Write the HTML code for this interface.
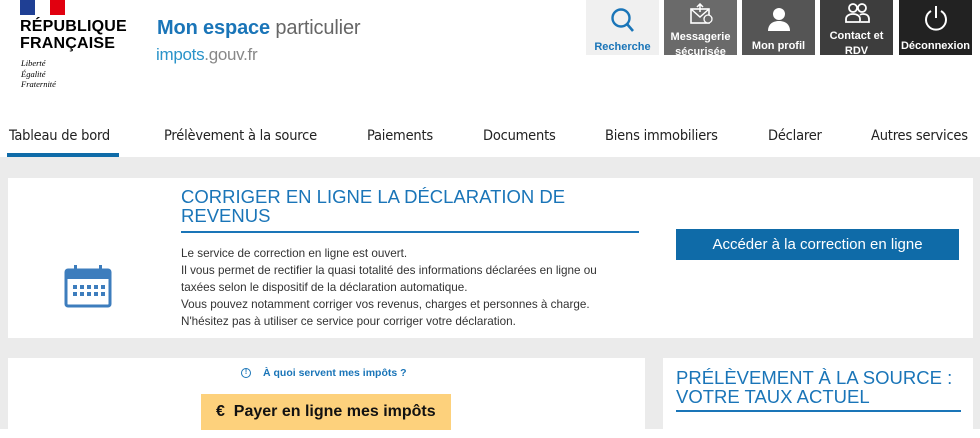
<!DOCTYPE html>
<html><head><meta charset="utf-8"><style>
*{margin:0;padding:0;box-sizing:border-box}
body{width:980px;height:429px;overflow:hidden;background:#fff;font-family:"Liberation Sans",Arial,sans-serif;position:relative}
.a{position:absolute}
.hb{position:absolute;top:0;height:55px;width:73px;color:#fff;font-weight:bold;font-size:11px;text-align:center;line-height:15px}
.nav{position:absolute;top:128px;font-size:14.5px;color:#222;font-family:"DejaVu Sans Condensed","Liberation Sans Narrow","Liberation Sans",sans-serif;letter-spacing:-0.2px}
.gray{position:absolute;left:0;top:157px;width:980px;height:272px;background:#ebebeb}
.card{position:absolute;background:#fff}
.txt{font-size:11.7px;color:#333;line-height:17px}
</style></head><body>
<div class="a" style="left:20px;top:0;width:15px;height:15px;background:#1f3f94"></div>
<div class="a" style="left:35px;top:0;width:15px;height:15px;background:#fff"></div>
<div class="a" style="left:50px;top:0;width:15px;height:15px;background:#e1000f"></div>
<div class="a" style="left:20px;top:18px;font-weight:bold;font-size:16px;line-height:17px;color:#000;letter-spacing:0.2px">RÉPUBLIQUE<br>FRANÇAISE</div>
<div class="a" style="left:21px;top:58px;font-family:'Liberation Serif',serif;font-style:italic;font-size:8.5px;line-height:10.5px;color:#000">Liberté<br>Égalité<br>Fraternité</div>
<div class="a" style="left:157px;top:17px;font-size:20px;font-weight:bold;color:#1a75b8;letter-spacing:-0.15px">Mon espace <span style="font-weight:normal;color:#666">particulier</span></div>
<div class="a" style="left:156px;top:45px;font-size:17px;color:#2a93c9;letter-spacing:-0.3px">impots<span style="color:#888">.gouv.fr</span></div>
<div class="hb" style="left:586px;background:#f0f0f0;color:#1a75b8">
<svg width="26" height="28" viewBox="0 0 26 28" style="margin-top:7px"><circle cx="11" cy="11" r="8.5" fill="none" stroke="#1a75b8" stroke-width="2.4"/><path d="M17 17l6 7" stroke="#1a75b8" stroke-width="2.6"/></svg><div>Recherche</div></div>
<div class="hb" style="left:664px;background:#6a6a6a"><svg width="26" height="22" viewBox="0 0 26 22" style="margin-top:3px"><rect x="3" y="6" width="18" height="14" fill="none" stroke="#fff" stroke-width="1.6"/><path d="M3 6l9 8 9-8M12 1v8M9 4l3-3 3 3" stroke="#fff" stroke-width="1.5" fill="none"/><circle cx="20" cy="16" r="4" fill="#6a6a6a" stroke="#fff" stroke-width="1.3"/></svg><div>Messagerie<br>sécurisée</div></div>
<div class="hb" style="left:742px;background:#555"><svg width="26" height="26" viewBox="0 0 26 26" style="margin-top:6px"><circle cx="13" cy="8" r="6" fill="#fff"/><path d="M2 25c0-7 5-10 11-10s11 3 11 10z" fill="#fff"/></svg><div style="margin-top:2px">Mon profil</div></div>
<div class="hb" style="left:820px;background:#3d3d3d"><svg width="28" height="22" viewBox="0 0 28 22" style="margin-top:2px"><circle cx="10" cy="6" r="4" fill="none" stroke="#fff" stroke-width="1.8"/><circle cx="19" cy="6" r="4" fill="none" stroke="#fff" stroke-width="1.8"/><path d="M3 20v-3c0-3 3-5 7-5s7 2 7 5v3zM17 13c1-1 2-1 3-1 4 0 6 2 6 5v3h-8" fill="none" stroke="#fff" stroke-width="1.8"/></svg><div>Contact et<br>RDV</div></div>
<div class="hb" style="left:899px;background:#222"><svg width="26" height="28" viewBox="0 0 26 28" style="margin-top:4px"><path d="M8 7a10 10 0 1 0 10 0" fill="none" stroke="#fff" stroke-width="2"/><path d="M13 2v12" stroke="#fff" stroke-width="2"/></svg><div style="margin-top:2px">Déconnexion</div></div>
<div class="nav" style="left:9px">Tableau de bord</div>
<div class="nav" style="left:164px">Prélèvement à la source</div>
<div class="nav" style="left:367px">Paiements</div>
<div class="nav" style="left:483px">Documents</div>
<div class="nav" style="left:605px">Biens immobiliers</div>
<div class="nav" style="left:768px">Déclarer</div>
<div class="nav" style="left:871px">Autres services</div>
<div class="a" style="left:7px;top:153px;width:112px;height:4px;background:#0f6ba8"></div>
<div class="gray"></div>
<div class="card" style="left:8px;top:178px;width:965px;height:160px"></div>
<svg class="a" style="left:64px;top:264px" width="49" height="44" viewBox="0 0 49 44"><rect x="2" y="6" width="44" height="36" rx="2" fill="none" stroke="#3d7dbd" stroke-width="3"/><rect x="2" y="6" width="44" height="9" fill="#3d7dbd"/><rect x="10" y="1" width="3" height="8" fill="#3d7dbd"/><rect x="35" y="1" width="3" height="8" fill="#3d7dbd"/><g fill="#3d7dbd"><rect x="9" y="21" width="4" height="4"/><rect x="16" y="21" width="4" height="4"/><rect x="23" y="21" width="4" height="4"/><rect x="30" y="21" width="4" height="4"/><rect x="37" y="21" width="4" height="4"/><rect x="9" y="28" width="4" height="4"/><rect x="16" y="28" width="4" height="4"/><rect x="23" y="28" width="4" height="4"/><rect x="30" y="28" width="4" height="4"/><rect x="37" y="28" width="4" height="4"/></g></svg>
<div class="a" style="left:181px;top:187px;font-size:18.5px;line-height:19px;color:#1a75b8;width:460px">CORRIGER EN LIGNE LA DÉCLARATION DE REVENUS</div>
<div class="a" style="left:181px;top:231px;width:458px;height:2px;background:#1a75b8"></div>
<div class="a txt" style="left:181px;top:245px">Le service de correction en ligne est ouvert.<br>Il vous permet de rectifier la quasi totalité des informations déclarées en ligne ou<br>taxées selon le dispositif de la déclaration automatique.<br>Vous pouvez notamment corriger vos revenus, charges et personnes à charge.<br>N'hésitez pas à utiliser ce service pour corriger votre déclaration.</div>
<div class="a" style="left:676px;top:229px;width:283px;height:31px;background:#0f6ba8;color:#fff;font-size:15px;text-align:center;line-height:31px">Accéder à la correction en ligne</div>
<div class="card" style="left:8px;top:358px;width:637px;height:80px"></div>
<div class="card" style="left:663px;top:358px;width:310px;height:80px"></div>
<div class="a" style="left:241px;top:368px;width:10px;height:10px;border:1.3px solid #1a75b8;border-radius:50%;font-size:7px;color:#1a75b8;text-align:center;line-height:8px;font-weight:bold">!</div>
<div class="a" style="left:263px;top:367px;font-size:10.5px;font-weight:bold;color:#1a75b8">À quoi servent mes impôts ?</div>
<div class="a" style="left:201px;top:394px;width:250px;height:36px;background:#fdd17c;font-size:16px;font-weight:bold;color:#111;line-height:36px;padding-left:15px">€&nbsp; Payer en ligne mes impôts</div>
<div class="a" style="left:676px;top:368px;font-size:18.5px;line-height:19px;color:#1a75b8">PRÉLÈVEMENT À LA SOURCE :<br>VOTRE TAUX ACTUEL</div>
<div class="a" style="left:676px;top:410px;width:285px;height:2px;background:#1a75b8"></div>
</body></html>
